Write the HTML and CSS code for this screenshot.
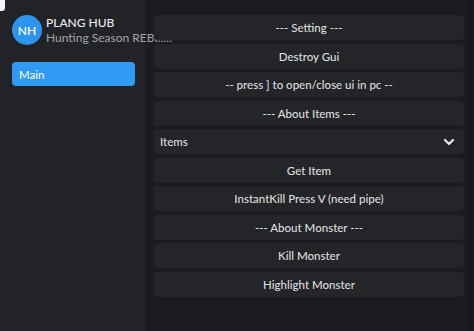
FILE: index.html
```html
<!DOCTYPE html>
<html lang="en">
<head>
    <meta charset="UTF-8">
    <meta name="viewport" content="width=device-width, initial-scale=1.0">
    <title>PLANG HUB</title>
    <link rel="stylesheet" href="styles.css">
</head>
<body>
    <div class="corner"></div>
    <div class="window">
        <aside class="sidebar">
            <div class="profile">
                <div class="avatar">NH</div>
                <div class="profile-text">
                    <div class="hub-name">PLANG HUB</div>
                    <div class="hub-game">Hunting Season REBI.....</div>
                </div>
            </div>
            <button class="tab active">Main</button>
        </aside>
        <main class="content">
            <div class="row">--- Setting ---</div>
            <button class="row">Destroy Gui</button>
            <div class="row">-- press ] to open/close ui in pc --</div>
            <div class="row">--- About Items ---</div>
            <div class="row dropdown">
                <span>Items</span>
                <svg class="chevron" width="12" height="8" viewBox="0 0 12 8">
                    <path d="M2 2 L6 6 L10 2" fill="none" stroke="#e6e6e6" stroke-width="2.2" stroke-linecap="round" stroke-linejoin="round"/>
                </svg>
            </div>
            <button class="row">Get Item</button>
            <button class="row">InstantKill Press V (need pipe)</button>
            <div class="row">--- About Monster ---</div>
            <button class="row">Kill Monster</button>
            <button class="row">Highlight Monster</button>
        </main>
    </div>
</body>
</html>
```

FILE: styles.css
```css
* {
    margin: 0;
    padding: 0;
    box-sizing: border-box;
}
body {
    width: 474px;
    height: 331px;
    overflow: hidden;
    background: #18191c;
    font-family: Lato, "Noto Sans", sans-serif;
    color: #dedede;
}
.corner {
    position: absolute;
    top: 0;
    left: 0;
    width: 5px;
    height: 11px;
    background: #f2f2f2;
    border-bottom-right-radius: 3px;
}
.window {
    display: flex;
    height: 100%;
    width: 467px;
    background: #1b1c1f;
}
.sidebar {
    width: 145px;
    flex-shrink: 0;
    background: #222327;
    padding: 15px 10px 0 12px;
    display: flex;
    flex-direction: column;
    gap: 17px;
}
.profile {
    display: flex;
    align-items: center;
    gap: 4px;
    height: 30px;
}
.avatar {
    width: 30px;
    height: 30px;
    border-radius: 50%;
    background: #2d95ef;
    color: #fff;
    font-size: 12px;
    font-weight: 600;
    display: flex;
    align-items: center;
    justify-content: center;
    flex-shrink: 0;
}
.profile-text {
    white-space: nowrap;
    line-height: 15px;
}
.hub-name {
    font-size: 12px;
    color: #ececec;
    font-weight: 500;
}
.hub-game {
    font-size: 12px;
    color: #a4a4a8;
}
.tab {
    height: 24px;
    width: 123px;
    border: none;
    border-radius: 4px;
    background: #2f9bf3;
    color: #fff;
    font-family: inherit;
    font-size: 11.5px;
    text-align: left;
    padding-left: 7px;
}
.content {
    flex: 1;
    padding: 15px 3px 0 9px;
    display: flex;
    flex-direction: column;
    gap: 3.5px;
}
.row {
    height: 25px;
    width: 310px;
    border: none;
    border-radius: 4px;
    background: #242529;
    color: #dedede;
    font-family: inherit;
    font-size: 11.5px;
    font-weight: 500;
    display: flex;
    align-items: center;
    justify-content: center;
}
.dropdown {
    justify-content: space-between;
    padding: 0 9px 0 6px;
}
.chevron {
    display: block;
}
```
